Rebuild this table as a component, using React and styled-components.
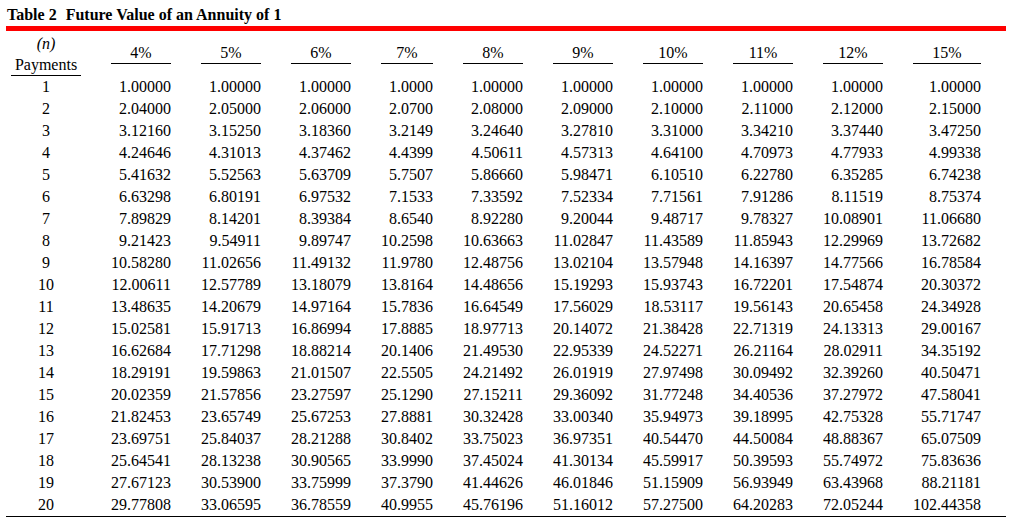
import React from "react";
import styled, { createGlobalStyle } from "styled-components";

const GlobalStyle = createGlobalStyle`
  html, body {
    margin: 0;
    padding: 0;
    background: #ffffff;
  }
  body {
    font-family: "Liberation Serif", "Times New Roman", serif;
    color: #000000;
  }
`;

const rates = ["4%", "5%", "6%", "7%", "8%", "9%", "10%", "11%", "12%", "15%"];

const rows = [
  ["1.00000", "1.00000", "1.00000", "1.0000", "1.00000", "1.00000", "1.00000", "1.00000", "1.00000", "1.00000"],
  ["2.04000", "2.05000", "2.06000", "2.0700", "2.08000", "2.09000", "2.10000", "2.11000", "2.12000", "2.15000"],
  ["3.12160", "3.15250", "3.18360", "3.2149", "3.24640", "3.27810", "3.31000", "3.34210", "3.37440", "3.47250"],
  ["4.24646", "4.31013", "4.37462", "4.4399", "4.50611", "4.57313", "4.64100", "4.70973", "4.77933", "4.99338"],
  ["5.41632", "5.52563", "5.63709", "5.7507", "5.86660", "5.98471", "6.10510", "6.22780", "6.35285", "6.74238"],
  ["6.63298", "6.80191", "6.97532", "7.1533", "7.33592", "7.52334", "7.71561", "7.91286", "8.11519", "8.75374"],
  ["7.89829", "8.14201", "8.39384", "8.6540", "8.92280", "9.20044", "9.48717", "9.78327", "10.08901", "11.06680"],
  ["9.21423", "9.54911", "9.89747", "10.2598", "10.63663", "11.02847", "11.43589", "11.85943", "12.29969", "13.72682"],
  ["10.58280", "11.02656", "11.49132", "11.9780", "12.48756", "13.02104", "13.57948", "14.16397", "14.77566", "16.78584"],
  ["12.00611", "12.57789", "13.18079", "13.8164", "14.48656", "15.19293", "15.93743", "16.72201", "17.54874", "20.30372"],
  ["13.48635", "14.20679", "14.97164", "15.7836", "16.64549", "17.56029", "18.53117", "19.56143", "20.65458", "24.34928"],
  ["15.02581", "15.91713", "16.86994", "17.8885", "18.97713", "20.14072", "21.38428", "22.71319", "24.13313", "29.00167"],
  ["16.62684", "17.71298", "18.88214", "20.1406", "21.49530", "22.95339", "24.52271", "26.21164", "28.02911", "34.35192"],
  ["18.29191", "19.59863", "21.01507", "22.5505", "24.21492", "26.01919", "27.97498", "30.09492", "32.39260", "40.50471"],
  ["20.02359", "21.57856", "23.27597", "25.1290", "27.15211", "29.36092", "31.77248", "34.40536", "37.27972", "47.58041"],
  ["21.82453", "23.65749", "25.67253", "27.8881", "30.32428", "33.00340", "35.94973", "39.18995", "42.75328", "55.71747"],
  ["23.69751", "25.84037", "28.21288", "30.8402", "33.75023", "36.97351", "40.54470", "44.50084", "48.88367", "65.07509"],
  ["25.64541", "28.13238", "30.90565", "33.9990", "37.45024", "41.30134", "45.59917", "50.39593", "55.74972", "75.83636"],
  ["27.67123", "30.53900", "33.75999", "37.3790", "41.44626", "46.01846", "51.15909", "56.93949", "63.43968", "88.21181"],
  ["29.77808", "33.06595", "36.78559", "40.9955", "45.76196", "51.16012", "57.27500", "64.20283", "72.05244", "102.44358"],
];

const Page = styled.div`
  width: 1000px;
  padding: 5px 6px 0 6px;
`;

const Title = styled.h1`
  margin: 0 0 0 1px;
  font-size: 16px;
  line-height: 20px;
  font-weight: bold;
  white-space: nowrap;
`;

const TitleText = styled.span`
  margin-left: 9px;
`;

const RedRule = styled.div`
  margin-top: 1px;
  height: 5px;
  background: #ff0000;
`;

const Table = styled.table`
  border-collapse: collapse;
  border-spacing: 0;
  font-size: 16px;
`;

const HeadCell = styled.th`
  padding: ${(p) => (p.$first ? "2px 15px 0 5px" : p.$last ? "11px 25px 0 15px" : "11px 15px 0 15px")};
  vertical-align: top;
  font-weight: normal;
  white-space: nowrap;
`;

const HeadLabel = styled.div`
  display: block;
  min-width: ${(p) => (p.$wide ? "70px" : "0")};
  text-align: center;
  line-height: 21px;
  border-bottom: 1px solid #000000;
`;

const Italic = styled.div`
  font-style: italic;
  line-height: 21px;
  text-align: center;
`;

const Row = styled.tr`
  &:last-child td {
    border-bottom: 1px solid #000000;
  }
`;

const Cell = styled.td`
  padding: ${(p) => (p.$first ? "0 15px 0 5px" : p.$last ? "0 25px 0 15px" : "0 15px")};
  height: 22px;
  line-height: 22px;
  text-align: ${(p) => (p.$first ? "center" : "right")};
  white-space: nowrap;
`;

export default function App() {
  return (
    <>
      <GlobalStyle />
      <Page>
        <Title>
          Table 2<TitleText>Future Value of an Annuity of 1</TitleText>
        </Title>
        <RedRule />
        <Table>
          <thead>
            <tr>
              <HeadCell $first>
                <Italic>(n)</Italic>
                <HeadLabel $wide>Payments</HeadLabel>
              </HeadCell>
              {rates.map((r, i) => (
                <HeadCell key={r} $last={i === rates.length - 1}>
                  <HeadLabel>{r}</HeadLabel>
                </HeadCell>
              ))}
            </tr>
          </thead>
          <tbody>
            {rows.map((vals, idx) => (
              <Row key={idx}>
                <Cell $first>{idx + 1}</Cell>
                {vals.map((v, i) => (
                  <Cell key={i} $last={i === vals.length - 1}>
                    {v}
                  </Cell>
                ))}
              </Row>
            ))}
          </tbody>
        </Table>
      </Page>
    </>
  );
}
